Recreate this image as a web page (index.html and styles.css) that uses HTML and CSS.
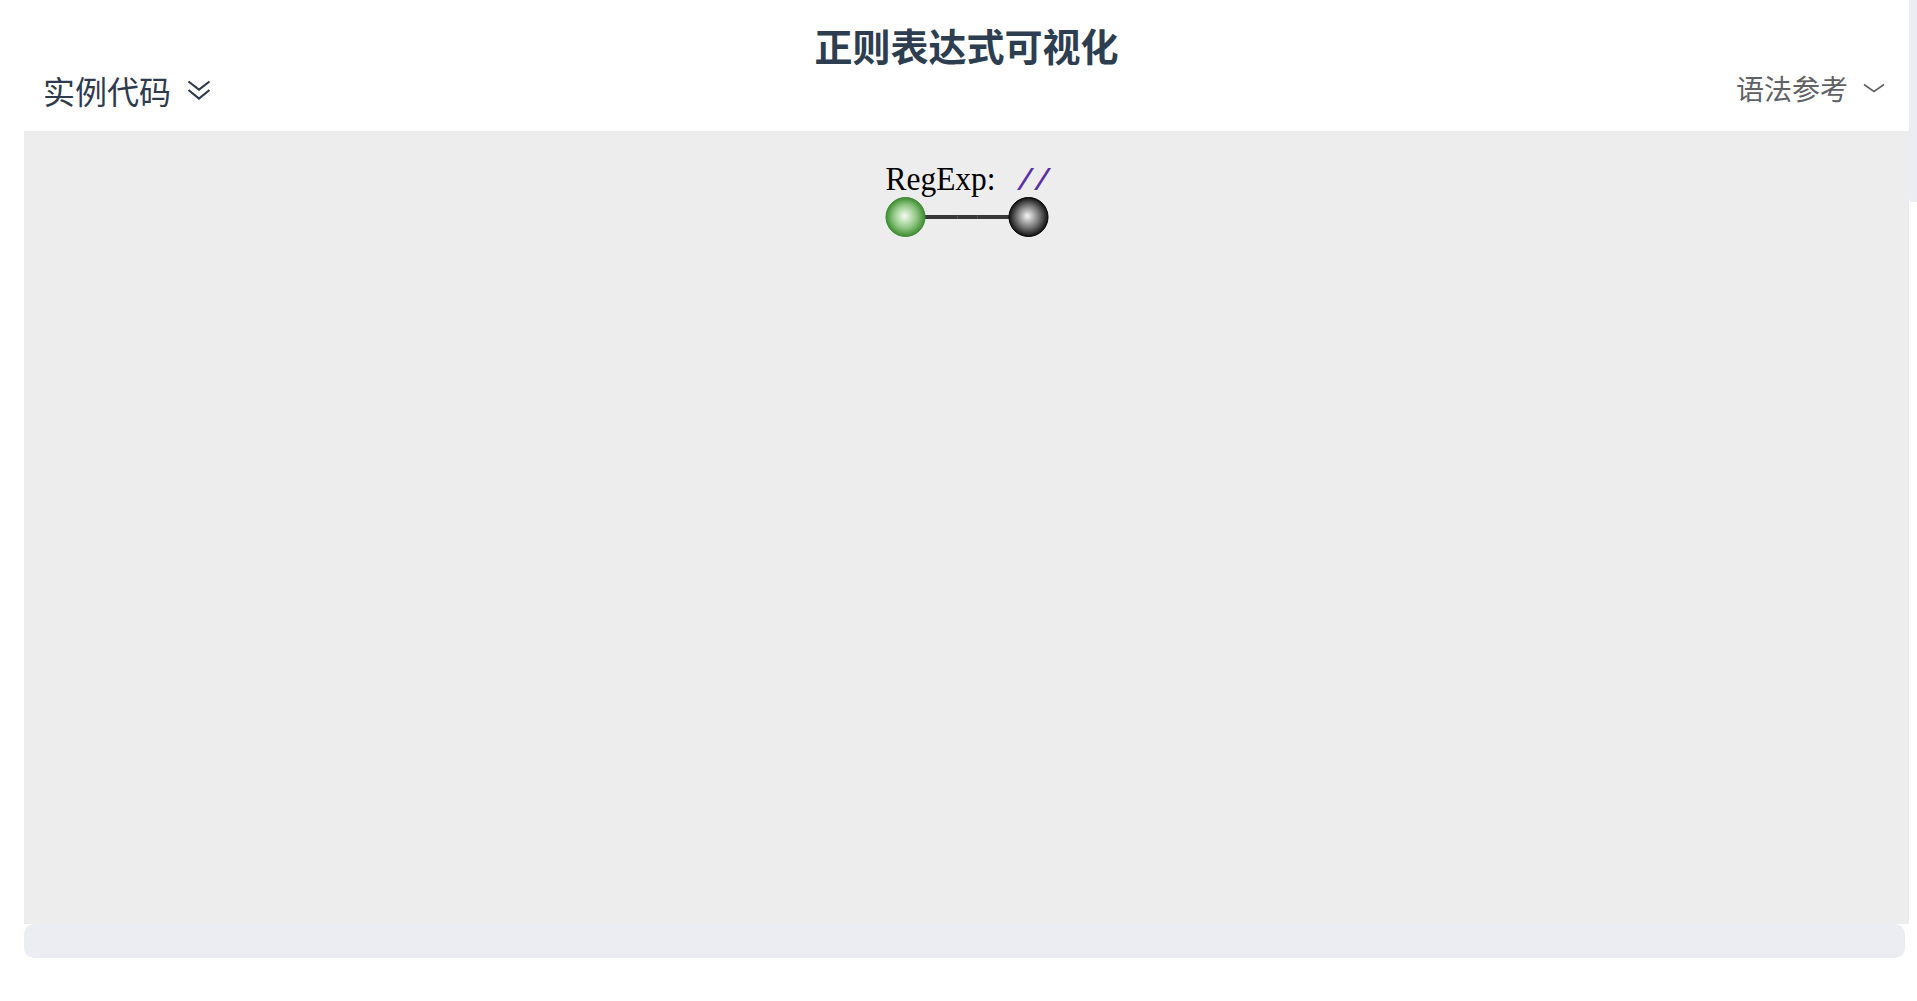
FILE: index.html
```html
<!DOCTYPE html>
<html lang="zh-CN">
<head>
<meta charset="utf-8">
<title>正则表达式可视化</title>
<link rel="stylesheet" href="styles.css">
</head>
<body>
<div class="page">
  <div class="main">
    <header class="header">
      <h1 class="title">正则表达式可视化</h1>
      <div class="toolbar">
        <div class="menu menu-left">
          <span class="menu-text">实例代码</span>
          <svg class="icon-double" width="24" height="21" viewBox="0 0 24 21" aria-hidden="true">
            <polyline points="1.5,1.5 12,9.5 22.5,1.5" />
            <polyline points="1.5,10 12,18.5 22.5,10" />
          </svg>
        </div>
        <div class="menu menu-right">
          <span class="menu-text">语法参考</span>
          <svg class="icon-single" width="22" height="10" viewBox="0 0 22 10" aria-hidden="true">
            <polyline points="1,1.5 11,8.5 21,1.5" />
          </svg>
        </div>
      </div>
    </header>
    <section class="canvas">
      <svg class="diagram" width="170" height="90" viewBox="0 0 170 90">
        <defs>
          <radialGradient id="gStart" cx="0.5" cy="0.5" r="0.5" fx="0.47" fy="0.47">
            <stop offset="0" stop-color="#f6fdf2"/>
            <stop offset="0.6" stop-color="#8fc682"/>
            <stop offset="1" stop-color="#3d8c31"/>
          </radialGradient>
          <radialGradient id="gEnd" cx="0.5" cy="0.5" r="0.5" fx="0.47" fy="0.47">
            <stop offset="0" stop-color="#f6f6f6"/>
            <stop offset="0.6" stop-color="#707070"/>
            <stop offset="1" stop-color="#111"/>
          </radialGradient>
        </defs>
        <text class="re-label" x="3.5" y="35" textLength="110" lengthAdjust="spacingAndGlyphs">RegExp:</text>
        <text class="re-slash" x="135" y="35" textLength="34" lengthAdjust="spacingAndGlyphs">//</text>
        <line class="edge" x1="43" y1="62" x2="127" y2="62"/>
        <line class="tick" x1="75.5" y1="60.5" x2="75.5" y2="63.5"/>
        <line class="tick" x1="95.5" y1="60.5" x2="95.5" y2="63.5"/>
        <circle cx="23.5" cy="62" r="19.5" fill="url(#gStart)" stroke="#3a8a2f" stroke-width="1"/>
        <circle cx="146.5" cy="62" r="19.5" fill="url(#gEnd)" stroke="#000" stroke-width="1"/>
      </svg>
    </section>
    <div class="footer-bar"></div>
  </div>
  <div class="edge-strip"></div>
</div>
</body>
</html>
```

FILE: styles.css
```css
html, body {
  margin: 0;
  padding: 0;
  background: #ffffff;
}

body {
  font-family: "Noto Sans CJK SC", "Noto Sans", sans-serif;
  color: #2c3e50;
}

.page {
  display: flex;
  align-items: flex-start;
  width: 1917px;
}

.main {
  flex: 1;
  padding-left: 24px;
}

.edge-strip {
  width: 8px;
  height: 202px;
  background: #ecedf3;
  border-bottom-left-radius: 4px;
}

.header {
  height: 131px;
  background: #ffffff;
  box-sizing: border-box;
  padding-top: 26px;
}

.title {
  margin: 0;
  text-align: center;
  font-size: 38px;
  line-height: 38px;
  font-weight: 700;
  color: #2c3e50;
}

.toolbar {
  display: flex;
  justify-content: space-between;
  align-items: flex-start;
  margin-top: 10px;
}

.menu {
  display: flex;
  align-items: center;
}

.menu-left {
  padding-left: 19px;
  gap: 16px;
  color: #2f3b4c;
}

.menu-left .menu-text {
  font-size: 32px;
  line-height: 32px;
}

.menu-right {
  padding-right: 24px;
  gap: 15px;
  color: #606266;
}

.menu-right .menu-text {
  font-size: 28px;
  line-height: 28px;
}

.icon-double polyline {
  fill: none;
  stroke: #2f3b4c;
  stroke-width: 2.2;
  stroke-linejoin: miter;
}

.icon-single polyline {
  fill: none;
  stroke: #606266;
  stroke-width: 1.6;
}

.canvas {
  height: 793px;
  background: #ededed;
  display: flex;
  justify-content: center;
  align-items: flex-start;
  padding-top: 24px;
  box-sizing: border-box;
}

.diagram {
  display: block;
}

.re-label {
  font-family: "Liberation Serif", "DejaVu Serif", serif;
  font-size: 34px;
  fill: #000;
}

.re-slash {
  font-family: "Liberation Serif", "DejaVu Serif", serif;
  font-size: 34px;
  fill: #5a2ea6;
}

.edge {
  stroke: #383838;
  stroke-width: 4;
}

.tick {
  stroke: #555;
  stroke-width: 1;
}

.footer-bar {
  height: 34px;
  margin-right: 4px;
  background: #ecedf3;
  border-radius: 10px;
}
```
